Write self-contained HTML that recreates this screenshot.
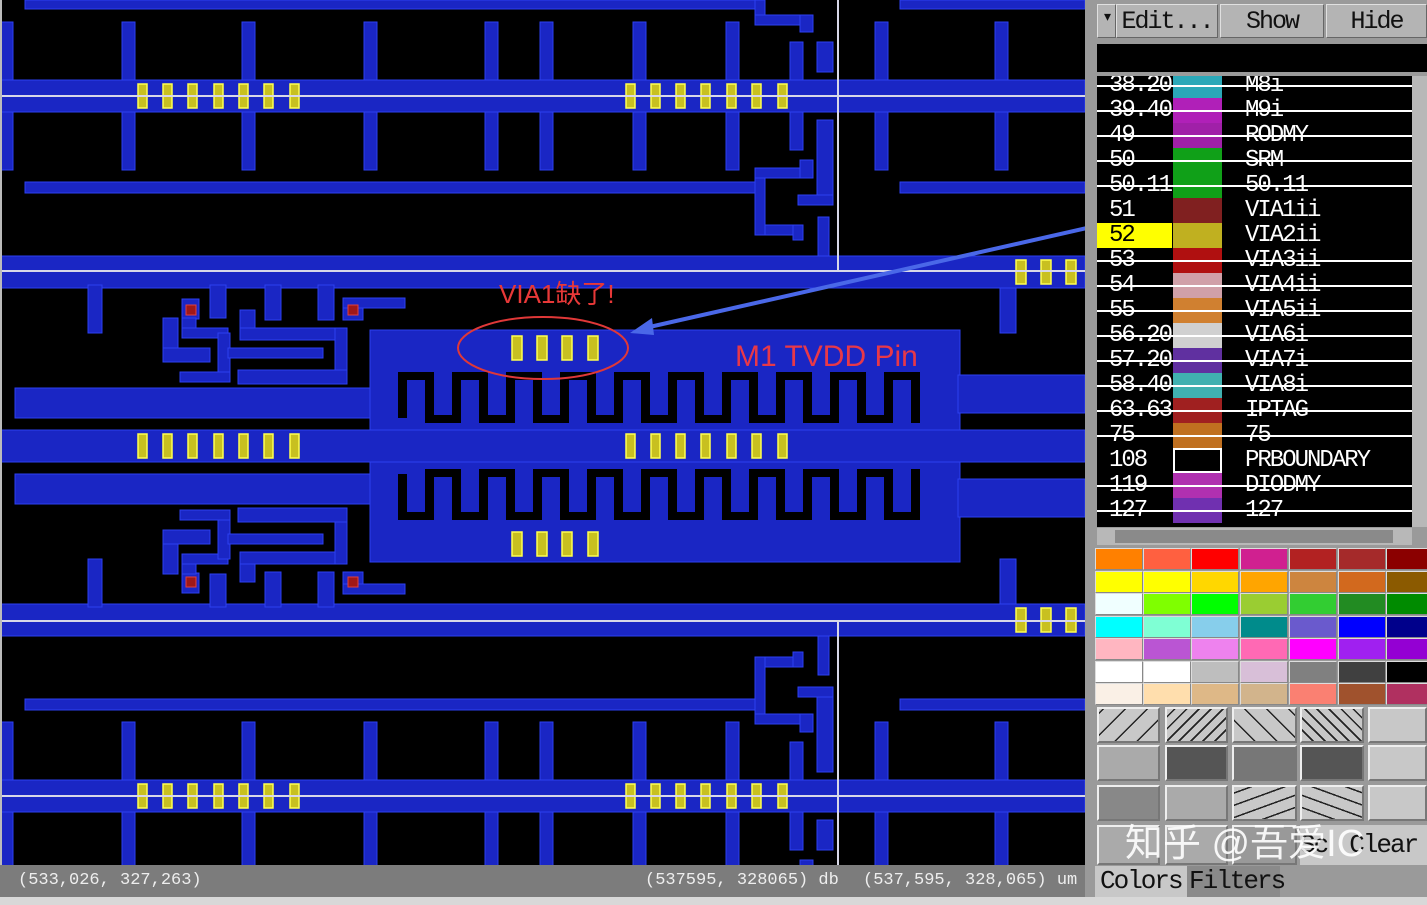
<!DOCTYPE html>
<html><head><meta charset="utf-8"><style>
html,body{margin:0;padding:0;background:#000;width:1427px;height:905px;overflow:hidden;position:relative;font-family:"Liberation Mono",monospace}
.panel{position:absolute;left:1085px;top:0;width:342px;height:905px;background:#9a9a9a}
.btn{position:absolute;top:4px;height:34px;background:#b4b4b4;border:1px solid #e0e0e0;border-right-color:#666;border-bottom-color:#666;box-sizing:border-box;font-size:25px;letter-spacing:-2px;color:#111;text-align:center;line-height:34px}
.lst{position:absolute;left:1097px;top:76px;width:315px;height:451px;background:#000;overflow:hidden}
.row{position:absolute;left:0;width:315px;height:25px;color:#fff;font-size:24px;letter-spacing:-2px;line-height:25px}
.row .n{position:absolute;left:12px;top:0}
.row .m{position:absolute;left:148px;top:0}
.row .sw{position:absolute;left:76px;top:0;width:49px;height:25px}
.row .ln{position:absolute;left:0;right:0;top:12px;height:2px;background:#fff}
.cg{position:absolute;left:1095px;top:548px;width:332px}
.cg div{position:absolute;height:20px;width:46px;border:1px solid #ddd;border-right-color:#888;border-bottom-color:#888}
.pt{position:absolute;height:36px;background:#c8c8c8;border:2px solid #eee;border-right-color:#777;border-bottom-color:#777;box-sizing:border-box}
.d1{background:repeating-linear-gradient(-45deg,#c8c8c8 0 14px,#222 14px 15.5px)}
.d2{background:repeating-linear-gradient(-45deg,#c8c8c8 0 7px,#222 7px 8.5px)}
.d3{background:repeating-linear-gradient(45deg,#c8c8c8 0 14px,#222 14px 15.5px)}
.d4{background:repeating-linear-gradient(45deg,#c8c8c8 0 7px,#222 7px 8.5px)}
.d5{background:repeating-linear-gradient(-20deg,#c8c8c8 0 10px,#222 10px 11.5px)}
.d6{background:repeating-linear-gradient(20deg,#c8c8c8 0 10px,#222 10px 11.5px)}
</style></head><body>
<svg width="1085" height="865" style="position:absolute;left:0;top:0" xmlns="http://www.w3.org/2000/svg">
<defs>
<g id="half" fill="#1a26c4" stroke="#2c40f0" stroke-width="1">
 <rect x="25" y="0" width="735" height="9"/>
 <rect x="755" y="0" width="10" height="25"/><rect x="755" y="15" width="58" height="10"/><rect x="800" y="15" width="13" height="17"/>
 <rect x="900" y="0" width="185" height="9"/>
 <rect x="0" y="22" width="13" height="148"/><rect x="122" y="22" width="13" height="148"/><rect x="242" y="22" width="13" height="148"/>
 <rect x="364" y="22" width="13" height="148"/><rect x="485" y="22" width="13" height="148"/><rect x="540" y="22" width="13" height="148"/>
 <rect x="633" y="22" width="13" height="148"/><rect x="726" y="22" width="13" height="148"/><rect x="790" y="42" width="13" height="108"/>
 <rect x="817" y="42" width="16" height="30"/><rect x="817" y="120" width="16" height="85"/>
 <rect x="875" y="22" width="13" height="148"/><rect x="995" y="22" width="13" height="148"/>
 <rect x="0" y="80" width="1085" height="32"/>
 <rect x="25" y="182" width="735" height="11"/><rect x="755" y="168" width="10" height="67"/><rect x="755" y="168" width="58" height="10"/><rect x="800" y="160" width="13" height="18"/>
 <rect x="765" y="225" width="38" height="10"/><rect x="793" y="225" width="10" height="15"/><rect x="798" y="195" width="35" height="10"/><rect x="818" y="217" width="11" height="40"/>
 <rect x="900" y="182" width="185" height="11"/>
 <rect x="0" y="256" width="1085" height="32"/>
 <rect x="88" y="285" width="14" height="48"/>
 <rect x="182" y="299" width="17" height="20"/>
 <rect x="210" y="285" width="16" height="33"/><rect x="265" y="285" width="16" height="35"/><rect x="318" y="285" width="16" height="35"/>
 <rect x="343" y="298" width="20" height="22"/><rect x="343" y="298" width="62" height="10"/>
 <rect x="163" y="318" width="15" height="44"/><rect x="163" y="348" width="47" height="14"/>
 <rect x="182" y="318" width="14" height="20"/><rect x="182" y="328" width="46" height="10"/><rect x="218" y="333" width="12" height="47"/><rect x="180" y="372" width="50" height="10"/>
 <rect x="240" y="310" width="15" height="30"/><rect x="240" y="328" width="105" height="12"/><rect x="228" y="348" width="95" height="10"/><rect x="335" y="328" width="12" height="54"/><rect x="238" y="370" width="109" height="14"/>
 <rect x="15" y="388" width="360" height="30"/>
 <rect x="370" y="330" width="590" height="102"/>
 <rect x="958" y="375" width="127" height="38"/>
 <rect x="1000" y="288" width="16" height="45"/>
</g>
<g id="halfk" fill="#000">
 <rect x="398" y="372" width="9" height="46"/><rect x="425" y="377" width="9" height="46"/><rect x="452" y="372" width="9" height="46"/><rect x="479" y="377" width="9" height="46"/><rect x="506" y="372" width="9" height="46"/><rect x="533" y="377" width="9" height="46"/><rect x="560" y="372" width="9" height="46"/><rect x="587" y="377" width="9" height="46"/><rect x="614" y="372" width="9" height="46"/><rect x="641" y="377" width="9" height="46"/><rect x="668" y="372" width="9" height="46"/><rect x="695" y="377" width="9" height="46"/><rect x="722" y="372" width="9" height="46"/><rect x="749" y="377" width="9" height="46"/><rect x="776" y="372" width="9" height="46"/><rect x="803" y="377" width="9" height="46"/><rect x="830" y="372" width="9" height="46"/><rect x="857" y="377" width="9" height="46"/><rect x="884" y="372" width="9" height="46"/><rect x="911" y="377" width="9" height="46"/>
 <rect x="398" y="372" width="36" height="8"/><rect x="452" y="372" width="36" height="8"/><rect x="506" y="372" width="36" height="8"/><rect x="560" y="372" width="36" height="8"/><rect x="614" y="372" width="36" height="8"/><rect x="668" y="372" width="36" height="8"/><rect x="722" y="372" width="36" height="8"/><rect x="776" y="372" width="36" height="8"/><rect x="830" y="372" width="36" height="8"/><rect x="884" y="372" width="36" height="8"/>
 <rect x="425" y="415" width="36" height="8"/><rect x="479" y="415" width="36" height="8"/><rect x="533" y="415" width="36" height="8"/><rect x="587" y="415" width="36" height="8"/><rect x="641" y="415" width="36" height="8"/><rect x="695" y="415" width="36" height="8"/><rect x="749" y="415" width="36" height="8"/><rect x="803" y="415" width="36" height="8"/><rect x="857" y="415" width="36" height="8"/>
</g>
<g id="halfv" fill="#c8c020" stroke="#ffff50" stroke-width="1.5">
 <rect x="138" y="84" width="9" height="24"/><rect x="163" y="84" width="9" height="24"/><rect x="188" y="84" width="9" height="24"/><rect x="214" y="84" width="9" height="24"/><rect x="239" y="84" width="9" height="24"/><rect x="264" y="84" width="9" height="24"/><rect x="290" y="84" width="9" height="24"/>
 <rect x="626" y="84" width="9" height="24"/><rect x="651" y="84" width="9" height="24"/><rect x="676" y="84" width="9" height="24"/><rect x="701" y="84" width="9" height="24"/><rect x="727" y="84" width="9" height="24"/><rect x="752" y="84" width="9" height="24"/><rect x="778" y="84" width="9" height="24"/>
 <rect x="1016" y="260" width="10" height="24"/><rect x="1041" y="260" width="10" height="24"/><rect x="1066" y="260" width="10" height="24"/>
 <rect x="512" y="336" width="10" height="24"/><rect x="537" y="336" width="10" height="24"/><rect x="562" y="336" width="10" height="24"/><rect x="588" y="336" width="10" height="24"/>
</g>
<g id="halfr" fill="#a01818" stroke="#e04040"><rect x="186" y="305" width="10" height="10"/><rect x="348" y="305" width="10" height="10"/></g>
<g id="halfw" fill="#d8d8e8"><rect x="0" y="95" width="1085" height="2"/><rect x="0" y="270" width="1085" height="2"/><rect x="837" y="0" width="2" height="271"/></g>
</defs>
<use href="#half"/><use href="#half" transform="matrix(1 0 0 -1 0 892)"/>
<rect x="0" y="430" width="1085" height="32" fill="#1a26c4" stroke="#2c40f0"/>
<use href="#halfk"/><use href="#halfk" transform="matrix(1 0 0 -1 0 892)"/>
<use href="#halfv"/><use href="#halfv" transform="matrix(1 0 0 -1 0 892)"/>
<use href="#halfr"/><use href="#halfr" transform="matrix(1 0 0 -1 0 892)"/>
<use href="#halfw"/><use href="#halfw" transform="matrix(1 0 0 -1 0 892)"/>
<g fill="#c8c020" stroke="#ffff50" stroke-width="1.5">
<rect x="138" y="434" width="9" height="24"/><rect x="163" y="434" width="9" height="24"/><rect x="188" y="434" width="9" height="24"/><rect x="214" y="434" width="9" height="24"/><rect x="239" y="434" width="9" height="24"/><rect x="264" y="434" width="9" height="24"/><rect x="290" y="434" width="9" height="24"/>
<rect x="626" y="434" width="9" height="24"/><rect x="651" y="434" width="9" height="24"/><rect x="676" y="434" width="9" height="24"/><rect x="701" y="434" width="9" height="24"/><rect x="727" y="434" width="9" height="24"/><rect x="752" y="434" width="9" height="24"/><rect x="778" y="434" width="9" height="24"/>
</g>
<rect x="0" y="0" width="2" height="865" fill="#bbb"/>
<ellipse cx="543" cy="348" rx="85" ry="31" fill="none" stroke="#e03838" stroke-width="2"/>
<line x1="1100" y1="225" x2="645" y2="328" stroke="#4a68e8" stroke-width="4"/>
<polygon points="630,333 652,318 654,335" fill="#4a68e8"/>
<text x="499" y="303" fill="#e83838" font-family="Liberation Sans, Noto Sans CJK SC, sans-serif" font-size="26">VIA1缺了!</text>
<text x="735" y="366" fill="#e83848" font-family="Liberation Sans, sans-serif" font-size="30">M1 TVDD Pin</text>
</svg>
<div style="position:absolute;left:0;top:865px;width:1085px;height:32px;background:#7c7c7c;color:#eee;font-size:17px;line-height:32px">
<span style="position:absolute;left:18px">(533,026, 327,263)</span>
<span style="position:absolute;left:645px">(537595, 328065) db</span>
<span style="position:absolute;left:863px">(537,595, 328,065) um</span></div>
<div style="position:absolute;left:0;top:897px;width:1085px;height:8px;background:#d8d8d8"></div>
<div class="panel"></div>
<div class="btn" style="left:1097px;width:19px;font-size:14px;line-height:26px">▾</div>
<div class="btn" style="left:1116px;width:102px">Edit...</div>
<div class="btn" style="left:1220px;width:104px">Show</div>
<div class="btn" style="left:1326px;width:101px">Hide</div>
<div style="position:absolute;left:1097px;top:44px;width:330px;height:28px;background:#000"></div>
<div class="lst">
<div class="row" style="top:-3px"><div class="sw" style="background:#2aa8b8"></div><span class="n">38.20</span><span class="m">M8i</span><div class="ln"></div></div>
<div class="row" style="top:22px"><div class="sw" style="background:#b020b8"></div><span class="n">39.40</span><span class="m">M9i</span><div class="ln"></div></div>
<div class="row" style="top:47px"><div class="sw" style="background:#a020a8"></div><span class="n">49</span><span class="m">RODMY</span><div class="ln"></div></div>
<div class="row" style="top:72px"><div class="sw" style="background:#10a018"></div><span class="n">50</span><span class="m">SRM</span><div class="ln"></div></div>
<div class="row" style="top:97px"><div class="sw" style="background:#10a018"></div><span class="n">50.11</span><span class="m">50.11</span><div class="ln"></div></div>
<div class="row" style="top:122px"><div class="sw" style="background:#802020"></div><span class="n">51</span><span class="m">VIA1ii</span></div>
<div class="row" style="top:147px"><div style="position:absolute;left:0;top:0;width:75px;height:25px;background:#ffff00"></div><div class="sw" style="background:#c0b020"></div><span class="n" style="color:#000">52</span><span class="m">VIA2ii</span></div>
<div class="row" style="top:172px"><div class="sw" style="background:#b01010"></div><span class="n">53</span><span class="m">VIA3ii</span><div class="ln"></div></div>
<div class="row" style="top:197px"><div class="sw" style="background:#d0a0a8"></div><span class="n">54</span><span class="m">VIA4ii</span><div class="ln"></div></div>
<div class="row" style="top:222px"><div class="sw" style="background:#d08030"></div><span class="n">55</span><span class="m">VIA5ii</span><div class="ln"></div></div>
<div class="row" style="top:247px"><div class="sw" style="background:#d0d0d0"></div><span class="n">56.20</span><span class="m">VIA6i</span><div class="ln"></div></div>
<div class="row" style="top:272px"><div class="sw" style="background:#6030a0"></div><span class="n">57.20</span><span class="m">VIA7i</span><div class="ln"></div></div>
<div class="row" style="top:297px"><div class="sw" style="background:#40b0b0"></div><span class="n">58.40</span><span class="m">VIA8i</span><div class="ln"></div></div>
<div class="row" style="top:322px"><div class="sw" style="background:#a02020"></div><span class="n">63.63</span><span class="m">IPTAG</span><div class="ln"></div></div>
<div class="row" style="top:347px"><div class="sw" style="background:#c07020"></div><span class="n">75</span><span class="m">75</span><div class="ln"></div></div>
<div class="row" style="top:372px"><div class="sw" style="background:#000;border:2px solid #fff;box-sizing:border-box"></div><span class="n">108</span><span class="m">PRBOUNDARY</span></div>
<div class="row" style="top:397px"><div class="sw" style="background:#b030b0"></div><span class="n">119</span><span class="m">DIODMY</span><div class="ln"></div></div>
<div class="row" style="top:422px"><div class="sw" style="background:#7030b0"></div><span class="n">127</span><span class="m">127</span><div class="ln"></div></div>
</div>
<div style="position:absolute;left:1412px;top:76px;width:15px;height:451px;background:#b8b8b8"></div>
<div style="position:absolute;left:1097px;top:528px;width:315px;height:17px;background:#b8b8b8"></div>
<div style="position:absolute;left:1115px;top:530px;width:278px;height:13px;background:#8a8a8a"></div>
<div class="cg">
<div style="left:0;top:0;background:#ff8000"></div><div style="left:48px;top:0;background:#ff6040"></div><div style="left:96px;top:0;background:#ff0000"></div><div style="left:145px;top:0;background:#d02090"></div><div style="left:194px;top:0;background:#b22222"></div><div style="left:243px;top:0;background:#a52a2a"></div><div style="left:291px;top:0;background:#8b0000"></div>
<div style="left:0;top:22.5px;background:#ffff00"></div><div style="left:48px;top:22.5px;background:#ffff00"></div><div style="left:96px;top:22.5px;background:#ffd700"></div><div style="left:145px;top:22.5px;background:#ffa500"></div><div style="left:194px;top:22.5px;background:#cd853f"></div><div style="left:243px;top:22.5px;background:#d2691e"></div><div style="left:291px;top:22.5px;background:#8b5a00"></div>
<div style="left:0;top:45px;background:#f0ffff"></div><div style="left:48px;top:45px;background:#7fff00"></div><div style="left:96px;top:45px;background:#00ff00"></div><div style="left:145px;top:45px;background:#9acd32"></div><div style="left:194px;top:45px;background:#32cd32"></div><div style="left:243px;top:45px;background:#228b22"></div><div style="left:291px;top:45px;background:#008b00"></div>
<div style="left:0;top:67.5px;background:#00ffff"></div><div style="left:48px;top:67.5px;background:#7fffd4"></div><div style="left:96px;top:67.5px;background:#87ceeb"></div><div style="left:145px;top:67.5px;background:#008b8b"></div><div style="left:194px;top:67.5px;background:#6a5acd"></div><div style="left:243px;top:67.5px;background:#0000ff"></div><div style="left:291px;top:67.5px;background:#00008b"></div>
<div style="left:0;top:90px;background:#ffb6c1"></div><div style="left:48px;top:90px;background:#ba55d3"></div><div style="left:96px;top:90px;background:#ee82ee"></div><div style="left:145px;top:90px;background:#ff69b4"></div><div style="left:194px;top:90px;background:#ff00ff"></div><div style="left:243px;top:90px;background:#a020f0"></div><div style="left:291px;top:90px;background:#9400d3"></div>
<div style="left:0;top:112.5px;background:#ffffff"></div><div style="left:48px;top:112.5px;background:#ffffff"></div><div style="left:96px;top:112.5px;background:#bebebe"></div><div style="left:145px;top:112.5px;background:#d8bfd8"></div><div style="left:194px;top:112.5px;background:#808080"></div><div style="left:243px;top:112.5px;background:#404040"></div><div style="left:291px;top:112.5px;background:#000000"></div>
<div style="left:0;top:135px;background:#faf0e6"></div><div style="left:48px;top:135px;background:#ffdead"></div><div style="left:96px;top:135px;background:#deb887"></div><div style="left:145px;top:135px;background:#d2b48c"></div><div style="left:194px;top:135px;background:#fa8072"></div><div style="left:243px;top:135px;background:#a0522d"></div><div style="left:291px;top:135px;background:#b03060"></div>
</div>
<div class="pt d1" style="left:1097px;top:707px;width:63px"></div><div class="pt d2" style="left:1165px;top:707px;width:63px"></div><div class="pt d3" style="left:1232px;top:707px;width:65px"></div><div class="pt d4" style="left:1300px;top:707px;width:64px"></div><div class="pt" style="left:1368px;top:707px;width:59px"></div>
<div class="pt" style="left:1097px;top:745px;width:63px;background:#aaa"></div><div class="pt" style="left:1165px;top:745px;width:63px;background:#555"></div><div class="pt" style="left:1232px;top:745px;width:65px;background:#777"></div><div class="pt" style="left:1300px;top:745px;width:64px;background:#555"></div><div class="pt" style="left:1368px;top:745px;width:59px"></div>
<div class="pt" style="left:1097px;top:785px;width:63px;background:#888"></div><div class="pt" style="left:1165px;top:785px;width:63px;background:#aaa"></div><div class="pt d5" style="left:1232px;top:785px;width:65px"></div><div class="pt d6" style="left:1300px;top:785px;width:64px"></div><div class="pt" style="left:1368px;top:785px;width:59px"></div>
<div class="pt" style="left:1097px;top:825px;width:63px;height:40px;background:#aaa"></div><div class="pt" style="left:1165px;top:825px;width:63px;height:40px;background:#aaa"></div><div class="pt" style="left:1232px;top:825px;width:65px;height:40px;background:#999"></div>
<div style="position:absolute;left:1300px;top:825px;width:127px;height:40px;background:#c8c8c8;font-size:26px;letter-spacing:-2px;line-height:40px;color:#111">Sc<span style="padding-left:22px">Clear</span></div>
<div style="position:absolute;left:1125px;top:822px;color:rgba(255,255,255,0.9);font-family:'Liberation Sans','Noto Sans CJK SC',sans-serif;font-size:38px;line-height:44px;white-space:nowrap">知乎 @吾爱IC</div>
<div style="position:absolute;left:1095px;top:866px;width:92px;height:31px;background:#c8c8c8;font-size:26px;letter-spacing:-2px;line-height:31px;color:#111;padding-left:5px;box-sizing:border-box">Colors</div>
<div style="position:absolute;left:1187px;top:866px;width:93px;height:31px;background:#8a8a8a;font-size:26px;letter-spacing:-2px;line-height:31px;color:#111;padding-left:2px;box-sizing:border-box">Filters</div>
<div style="position:absolute;left:1085px;top:897px;width:342px;height:8px;background:#d8d8d8"></div>
</body></html>
